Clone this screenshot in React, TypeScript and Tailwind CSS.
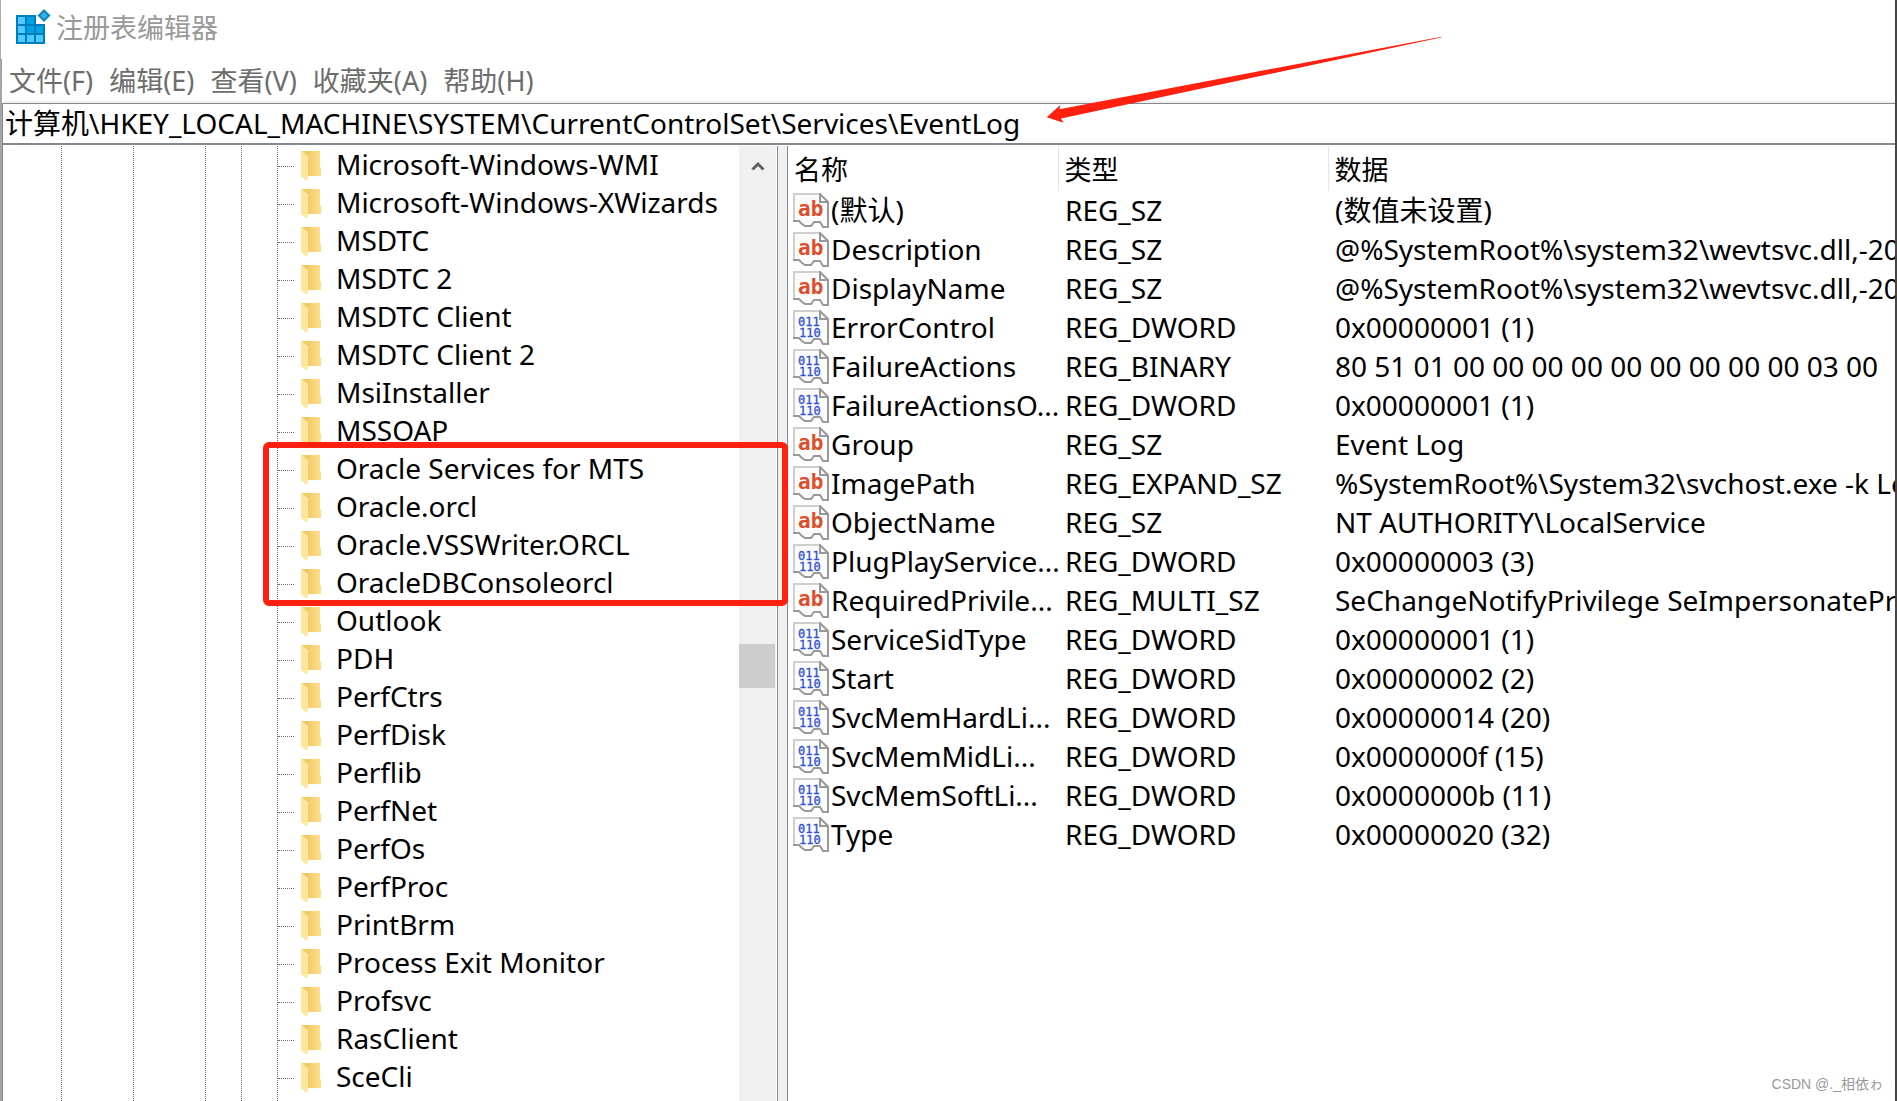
import React from 'react';

type ValueKind = 'text' | 'binary';

interface RegistryValue {
  name: string;
  kind: ValueKind;
  type: string;
  data: string;
}

const menus = ['文件(F)', '编辑(E)', '查看(V)', '收藏夹(A)', '帮助(H)'];

const treeKeys = [
  'Microsoft-Windows-WMI',
  'Microsoft-Windows-XWizards',
  'MSDTC',
  'MSDTC 2',
  'MSDTC Client',
  'MSDTC Client 2',
  'MsiInstaller',
  'MSSOAP',
  'Oracle Services for MTS',
  'Oracle.orcl',
  'Oracle.VSSWriter.ORCL',
  'OracleDBConsoleorcl',
  'Outlook',
  'PDH',
  'PerfCtrs',
  'PerfDisk',
  'Perflib',
  'PerfNet',
  'PerfOs',
  'PerfProc',
  'PrintBrm',
  'Process Exit Monitor',
  'Profsvc',
  'RasClient',
  'SceCli',
];

const values: RegistryValue[] = [
  { name: '(默认)', kind: 'text', type: 'REG_SZ', data: '(数值未设置)' },
  { name: 'Description', kind: 'text', type: 'REG_SZ', data: '@%SystemRoot%\\system32\\wevtsvc.dll,-20' },
  { name: 'DisplayName', kind: 'text', type: 'REG_SZ', data: '@%SystemRoot%\\system32\\wevtsvc.dll,-20' },
  { name: 'ErrorControl', kind: 'binary', type: 'REG_DWORD', data: '0x00000001 (1)' },
  { name: 'FailureActions', kind: 'binary', type: 'REG_BINARY', data: '80 51 01 00 00 00 00 00 00 00 00 00 03 00' },
  { name: 'FailureActionsO...', kind: 'binary', type: 'REG_DWORD', data: '0x00000001 (1)' },
  { name: 'Group', kind: 'text', type: 'REG_SZ', data: 'Event Log' },
  { name: 'ImagePath', kind: 'text', type: 'REG_EXPAND_SZ', data: '%SystemRoot%\\System32\\svchost.exe -k Lo' },
  { name: 'ObjectName', kind: 'text', type: 'REG_SZ', data: 'NT AUTHORITY\\LocalService' },
  { name: 'PlugPlayService...', kind: 'binary', type: 'REG_DWORD', data: '0x00000003 (3)' },
  { name: 'RequiredPrivile...', kind: 'text', type: 'REG_MULTI_SZ', data: 'SeChangeNotifyPrivilege SeImpersonatePriv' },
  { name: 'ServiceSidType', kind: 'binary', type: 'REG_DWORD', data: '0x00000001 (1)' },
  { name: 'Start', kind: 'binary', type: 'REG_DWORD', data: '0x00000002 (2)' },
  { name: 'SvcMemHardLi...', kind: 'binary', type: 'REG_DWORD', data: '0x00000014 (20)' },
  { name: 'SvcMemMidLi...', kind: 'binary', type: 'REG_DWORD', data: '0x0000000f (15)' },
  { name: 'SvcMemSoftLi...', kind: 'binary', type: 'REG_DWORD', data: '0x0000000b (11)' },
  { name: 'Type', kind: 'binary', type: 'REG_DWORD', data: '0x00000020 (32)' },
];

const RegeditLogo = () => (
  <svg width="36" height="38" viewBox="0 0 36 38" aria-hidden="true" className="shrink-0">
    <path d="M0 7h20v9h9v20H0z" fill="#007dbd" />
    <path d="M2 9h7v7H2zM2 18h7v7H2zM2 27h7v7H2zM11 27h7v7h-7zM20 27h7v7h-7z" fill="#4dcbff" />
    <path d="M11 9h7v7h-7zM11 18h7v7h-7zM20 18h7v7h-7z" fill="#00a2e4" />
    <path d="M28 1l6.500 6.500L28 14l-6.500-6.500z" fill="#1385bd" stroke="#8cc9e6" strokeWidth="1" />
    <path d="M28 4l3.500 3.500L28 11l-3.500-3.500z" fill="#35b1e8" />
  </svg>
);

const FolderIcon = () => (
  <svg width="22" height="32" viewBox="0 0 22 32" aria-hidden="true" className="shrink-0">
    <defs>
      <linearGradient id="folderBack" x1="0" x2="1">
        <stop offset="0.3" stopColor="#efcb68" />
        <stop offset="1" stopColor="#ffe08a" />
      </linearGradient>
    </defs>
    <path d="M1 1h18v16l1 1v8H6z" fill="url(#folderBack)" />
    <path d="M0 1l7 5v19l-1 6-6-5z" fill="#ffe69c" />
  </svg>
);

const ValueIcon = ({ kind }: { kind: ValueKind }) => (
  <svg width="36" height="36" viewBox="0 0 36 36" aria-hidden="true" className="shrink-0">
    <path d="M1 1h26l8 8v26h-4l-4-5h-4l-3 3h-8l-3-4H1z" fill="#fbfbfa" />
    <path d="M1 28V1h26" fill="none" stroke="#cfcfcf" strokeWidth="2" />
    <path d="M0 28h6l3 3 3 2h6l3-4h6l3 5h5V9l-8-8v8h8" fill="none" stroke="#999" strokeWidth="2" />
    {kind === 'text' ? (
      <text x="5" y="23" fontSize="21" fontWeight="700" fill="#dc4f2c" className="font-['DejaVu_Sans_Mono',monospace]">
        ab
      </text>
    ) : (
      <g fontSize="12" fill="#2f50d8" stroke="#2f50d8" strokeWidth="0.3" className="font-['DejaVu_Sans_Mono',monospace]">
        <text x="5" y="16">011</text>
        <text x="6" y="27">110</text>
      </g>
    )}
  </svg>
);

const TreeItem = ({ label }: { label: string }) => (
  <li className="flex h-[38px] items-center">
    <span className="w-4 border-t border-dotted border-[#6f6f6f]" />
    <span className="ml-[7px]">
      <FolderIcon />
    </span>
    <a href="#" className="ml-[13px] pb-1 leading-8 whitespace-nowrap">
      {label}
    </a>
  </li>
);

const Guide = ({ className }: { className: string }) => (
  <div className={`shrink-0 border-r border-dotted border-[#6f6f6f] ${className}`} />
);

const TreePane = () => (
  <nav className="flex w-[775px] shrink-0 overflow-hidden border-r border-[#828790]" aria-label="注册表项">
    <Guide className="w-[59px]" />
    <Guide className="w-[72px]" />
    <Guide className="w-[72px]" />
    <Guide className="w-[36px]" />
    <Guide className="w-[36px]" />
    <ul className="min-w-0 flex-1 pt-px">
      {treeKeys.map(k => (
        <TreeItem key={k} label={k} />
      ))}
    </ul>
    <div className="mr-px flex w-[37px] shrink-0 flex-col bg-[#f0f0f0]">
      <button type="button" aria-label="向上滚动" className="flex h-10 items-center justify-center">
        <svg width="14" height="10" viewBox="0 0 14 10" fill="none" stroke="#606060" strokeWidth="3">
          <path d="M1.5 8.5L7 3l5.5 5.5" />
        </svg>
      </button>
      <div className="mt-[458px] mr-px h-11 bg-[#cdcdcd]" />
    </div>
  </nav>
);

const ValuesPane = () => (
  <section className="min-w-0 flex-1 overflow-hidden border-l border-[#828790]">
    <table className="w-full table-fixed text-left whitespace-nowrap">
      <thead>
        <tr className="h-[45px] text-[27px]">
          <th className="w-[270px] border-r border-[#e5e5e5] pt-0.5 pl-1.5 font-normal">名称</th>
          <th className="w-[270px] border-r border-[#e5e5e5] pt-0.5 pl-1.5 font-normal">类型</th>
          <th className="pt-0.5 pl-1.5 font-normal">数据</th>
        </tr>
      </thead>
      <tbody>
        {values.map(v => (
          <tr key={v.name} className="h-[39px]">
            <td className="p-0 pl-[5px]">
              <div className="flex items-center gap-0.5">
                <ValueIcon kind={v.kind} />
                <span className="pb-0.5 leading-8">{v.name}</span>
              </div>
            </td>
            <td className="p-0 pb-0.5 pl-[7px]">{v.type}</td>
            <td className="overflow-hidden p-0 pb-0.5 pl-[7px]">{v.data}</td>
          </tr>
        ))}
      </tbody>
    </table>
  </section>
);

export default function App() {
  return (
    <div className="relative flex h-screen flex-col overflow-hidden border-r-2 border-[#444] bg-white font-['Noto_Sans','Noto_Sans_CJK_SC',sans-serif] text-[28px] leading-9 text-black">
      <header className="flex h-[59px] shrink-0 items-start gap-1 border-l border-[#aaa] pt-2 pl-[15px] text-[27px] text-[#999]">
        <RegeditLogo />
        <h1 className="pt-0.5">注册表编辑器</h1>
      </header>
      <div className="flex min-h-0 flex-1 flex-col border-l-2 border-[#a5a5a5]">
        <div className="flex h-11 shrink-0 items-center gap-4 border-b-2 border-[#f0f0f0] pt-0.5 pl-[7px] text-[27px] text-[#6d6d6d]">
          {menus.map(m => (
            <button key={m} type="button">
              {m}
            </button>
          ))}
        </div>
        <input
          type="text"
          aria-label="地址"
          defaultValue="计算机\HKEY_LOCAL_MACHINE\SYSTEM\CurrentControlSet\Services\EventLog"
          className="h-[42px] w-full shrink-0 border-t border-b-2 border-l border-[#828790] pr-1 pb-1 pl-0.5 outline-none"
        />
        <main className="flex min-h-0 flex-1 border-l border-[#828790] pt-px">
          <TreePane />
          <div className="w-[9px] shrink-0 bg-[#f0f0f0]" />
          <ValuesPane />
        </main>
      </div>

      {/* Annotations over the window */}
      <div className="pointer-events-none absolute top-[442px] left-[263px] h-[164px] w-[525px] rounded-md border-6 border-[#ff2010]" />
      <svg width="396" height="88" viewBox="0 0 396 88" aria-hidden="true" className="pointer-events-none absolute top-9 left-[1046px]">
        <path d="M395.5.7l.5.6L15 82.500l2.500 4.300L.7 81.300 14.300 69l-.8 4.200z" fill="#ff2010" />
      </svg>
      <p className="absolute right-3 bottom-[7px] font-['Liberation_Sans','Noto_Sans_CJK_JP',sans-serif] text-[14px] leading-5 text-[#999]">
        CSDN @._相依ゎ
      </p>
    </div>
  );
}
